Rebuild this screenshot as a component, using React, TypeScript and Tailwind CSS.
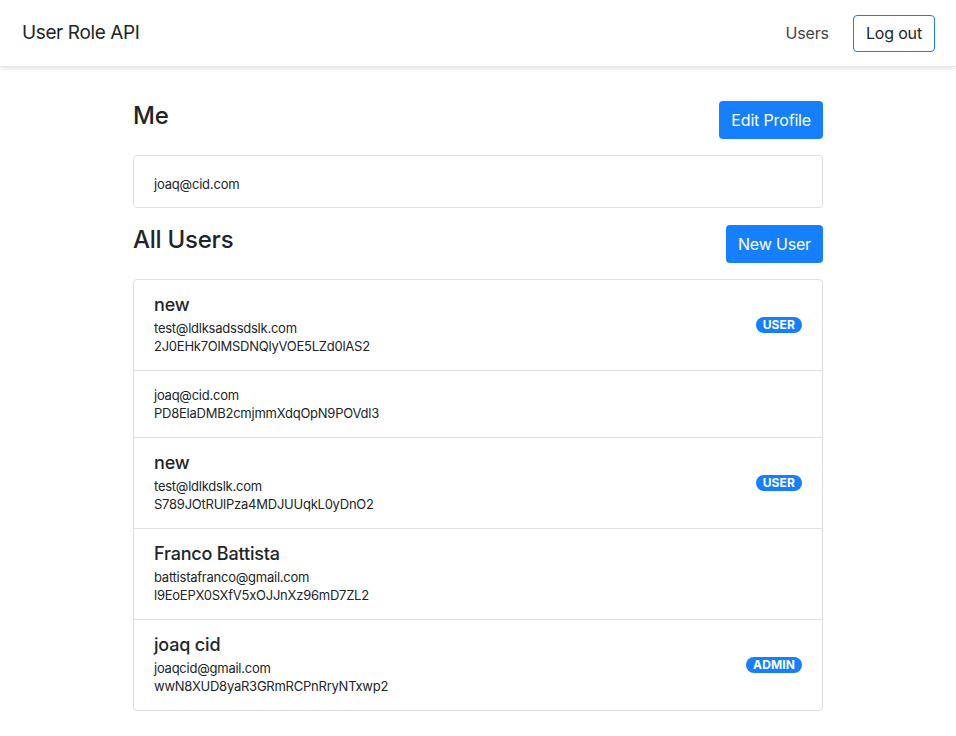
import React from 'react';

type User = {
  name?: string;
  email: string;
  uid: string;
  role?: string;
};

const users: User[] = [
  { name: 'new', email: 'test@ldlksadssdslk.com', uid: '2J0EHk7OlMSDNQlyVOE5LZd0lAS2', role: 'user' },
  { email: 'joaq@cid.com', uid: 'PD8ElaDMB2cmjmmXdqOpN9POVdl3' },
  { name: 'new', email: 'test@ldlkdslk.com', uid: 'S789JOtRUlPza4MDJUUqkL0yDnO2', role: 'user' },
  { name: 'Franco Battista', email: 'battistafranco@gmail.com', uid: 'l9EoEPX0SXfV5xOJJnXz96mD7ZL2' },
  { name: 'joaq cid', email: 'joaqcid@gmail.com', uid: 'wwN8XUD8yaR3GRmRCPnRryNTxwp2', role: 'admin' },
];

const SectionHeader = ({ title, action }: { title: string; action: string }) => (
  <div className="flex items-start justify-between mb-4">
    <h4 className="text-[24px] leading-[29px] font-medium tracking-[-0.01em] text-[#212529]">{title}</h4>
    <button className="h-[38px] px-3 rounded-[4px] bg-[#167ffc] text-white text-[16px] tracking-[-0.01em]">
      {action}
    </button>
  </div>
);

export default function App() {
  return (
    <div
      className="min-h-screen bg-white text-[#212529]"
      style={{ fontFamily: 'Inter, "Noto Sans", sans-serif' }}
    >
      {/* Navbar */}
      <nav className="h-[67px] flex items-center justify-between pl-[22px] pr-[21px] bg-white shadow-[0_2px_4px_rgba(0,0,0,0.1)] border-b border-[#e5e7eb]">
        <span className="text-[19px] tracking-[-0.02em] text-[#212529]">User Role API</span>
        <div className="flex items-center gap-6">
          <a className="text-[16px] tracking-[-0.01em] text-[#444]">Users</a>
          <button className="h-[37px] px-3 rounded-[4px] border border-[#167ffc] text-[16px] tracking-[-0.01em] text-[#212529]">
            Log out
          </button>
        </div>
      </nav>

      <main className="w-[690px] mx-auto pt-[34px] pb-6">
        <SectionHeader title="Me" action="Edit Profile" />
        <div className="border border-[#dfdfdf] rounded-[4px] px-5 pt-[19px] pb-[14px] mb-[17px]">
          <p className="text-[13px] leading-[18px] tracking-[-0.015em]">joaq@cid.com</p>
        </div>

        <SectionHeader title="All Users" action="New User" />
        <ul className="border border-[#dfdfdf] rounded-[4px]">
          {users.map((u, i) => (
            <li
              key={i}
              className={`flex items-center justify-between px-5 py-[15px] ${i > 0 ? 'border-t border-[#dfdfdf]' : ''}`}
            >
              <div className="tracking-[-0.015em]">
                {u.name && (
                  <h5 className="text-[18px] leading-[20px] font-medium mb-[4px] tracking-[-0.01em]">{u.name}</h5>
                )}
                <p className="text-[13px] leading-[18px]">{u.email}</p>
                <p className="text-[13px] leading-[18px]">{u.uid}</p>
              </div>
              {u.role && (
                <span className="rounded-full bg-[#167ffc] text-white text-[12px] font-bold leading-none uppercase px-[7px] py-[2px] tracking-[0.01em]">
                  {u.role}
                </span>
              )}
            </li>
          ))}
        </ul>
      </main>
    </div>
  );
}
